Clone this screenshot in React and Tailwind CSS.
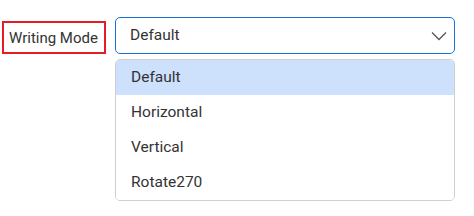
import React from "react";

const options = ["Default", "Horizontal", "Vertical", "Rotate270"];

const App = () => {
  return (
    <div
      className="w-[474px] h-[216px] bg-white text-[15.5px] text-[#333]"
      style={{ fontFamily: "Roboto, sans-serif" }}
    >
      <div className="flex items-start pt-[17px] pl-[2px]">
        {/* Label */}
        <div className="mt-[4px] h-[33px] w-[104px] border-2 border-[#e51c23] flex items-center pl-[5px] pt-[1px] text-[15px] whitespace-nowrap">
          Writing Mode
        </div>

        {/* Select + open list */}
        <div className="ml-[9px] w-[340px] flex flex-col">
          <div className="h-[37px] border-[1.5px] border-[#1a6fd8] rounded-[5px] flex items-center justify-between pl-[14px] pr-[7px] pt-[1px]">
            <span>Default</span>
            <svg width="16" height="10" viewBox="0 0 16 10" fill="none">
              <path d="M1 1.5 L8 8.5 L15 1.5" stroke="#555" strokeWidth="1.3" />
            </svg>
          </div>
          <div className="mt-[5px] border border-[#cfcfcf] rounded-[5px] overflow-hidden">
            {options.map((opt, i) => (
              <div
                key={opt}
                className={`h-[35px] flex items-center pl-[15px] pt-[1px] ${
                  i === 0 ? "bg-[#cde0fc]" : "bg-white"
                }`}
              >
                {opt}
              </div>
            ))}
          </div>
        </div>
      </div>
    </div>
  );
};

export default App;
